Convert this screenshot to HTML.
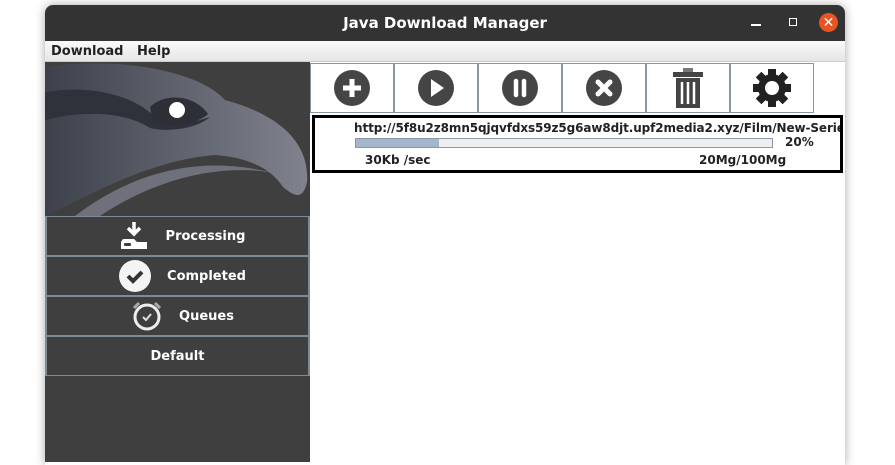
<!DOCTYPE html>
<html><head><style>
*{margin:0;padding:0;box-sizing:border-box}
body{width:895px;height:448px;background:#fff;position:relative;overflow:hidden;font-family:"Liberation Sans","DejaVu Sans",sans-serif}
.win{position:absolute;left:45px;top:5px;width:800px;height:460px;background:#fff;border-radius:8px 8px 0 0;box-shadow:0 0 10px rgba(0,0,0,.35);overflow:hidden}
.tb{height:36px;background:#333;color:#fff;font-weight:bold;font-size:15px;text-align:center;line-height:37px;font-family:"DejaVu Sans",sans-serif}
.menu{position:absolute;top:36px;left:0;width:800px;height:21px;background:linear-gradient(#fafafa,#e6e6e6);border-bottom:1px solid #ccc;font-family:"DejaVu Sans",sans-serif;font-weight:bold;font-size:13px;color:#222;line-height:22px;padding-left:6px}
.left{position:absolute;top:57px;left:0;width:265px;height:400px;background:#3f3f3f}
.btn{position:absolute;left:0;width:265px;height:40px;border:2px solid #7d8b98;border-top-width:1px;border-bottom-width:1px;color:#fff;font-family:"DejaVu Sans",sans-serif;font-weight:bold;font-size:13px;display:flex;align-items:center;justify-content:center;padding-left:10px}
.tool{position:absolute;top:58px;width:84px;height:50px;border:1px solid #8a97a3;background:#fff;display:flex;align-items:center;justify-content:center}
.item{position:absolute;left:267px;top:110px;width:531px;height:58px;border:3px solid #000;background:#fff;font-family:"DejaVu Sans",sans-serif;font-size:12px;font-weight:bold;color:#222;overflow:hidden}
</style></head><body>
<div class="win">
<div class="tb">Java Download Manager</div>
<div style="position:absolute;left:706px;top:19px;width:10px;height:1.5px;background:#fff"></div>
<div style="position:absolute;left:744px;top:13px;width:8px;height:8px;border:1.5px solid #fff"></div>
<div style="position:absolute;left:774px;top:8px;width:19px;height:19px;border-radius:50%;background:#e95420;color:#fff;font-size:14px;line-height:19px;text-align:center">✕</div>
<div class="menu">Download&nbsp;&nbsp;&nbsp;Help</div>
<div class="left">
<svg width="265" height="154" viewBox="0 0 265 154" style="position:absolute;top:0;left:0">
<defs><linearGradient id="g" x1="0" x2="1"><stop offset="0" stop-color="#3d414b"/><stop offset="1" stop-color="#80838d"/></linearGradient></defs>
<path d="M0 5 C60 -5 150 5 180 38 C225 50 265 75 262 120 C258 138 250 135 238 125 C225 105 200 95 170 93 C110 98 60 125 0 154 Z" fill="url(#g)"/>
<path d="M0 30 C50 22 90 35 110 55 C130 65 150 60 165 55 C150 68 120 70 105 66 C80 50 40 48 0 58 Z" fill="#2f323a"/>
<path d="M105 45 C120 30 150 33 163 52 C150 64 120 66 108 60 Z" fill="#2c2f36"/>
<circle cx="132" cy="48" r="8" fill="#fff"/>
<path d="M30 154 C90 108 160 92 232 112 C200 104 130 104 55 154Z" fill="#6e717b"/>
</svg>
<div class="btn" style="top:154px"><svg width="30" height="32" viewBox="0 0 30 32" style="margin-right:16px"><path d="M14 2v12M8 8l6 6 6-6" stroke="#fff" stroke-width="3.5" fill="none"/><path d="M3 19h11l3 3h10v7H1v-7z" fill="#fff"/><rect x="4" y="23" width="7" height="3" rx="1" fill="#3f3f3f"/></svg>Processing</div>
<div class="btn" style="top:194px"><svg width="32" height="32" viewBox="0 0 32 32" style="margin-right:16px"><circle cx="16" cy="16" r="16" fill="#f4f4f4"/><path d="M9 16l5 5 9-9" stroke="#333" stroke-width="4" fill="none"/></svg>Completed</div>
<div class="btn" style="top:234px"><svg width="32" height="32" viewBox="0 0 32 32" style="margin-right:16px"><circle cx="16" cy="17" r="12" stroke="#eee" stroke-width="3" fill="none"/><path d="M3 8l5-5M29 8l-5-5" stroke="#aaa" stroke-width="3"/><path d="M12 17l3 3 5-6" stroke="#ddd" stroke-width="2" fill="none"/></svg>Queues</div>
<div class="btn" style="top:274px;padding-left:0">Default</div>
</div>
<div class="tool" style="left:265px"><svg width="38" height="38"><circle cx="19" cy="19" r="18" fill="#454545"/><path d="M19 10v18M10 19h18" stroke="#fff" stroke-width="5"/></svg></div>
<div class="tool" style="left:349px"><svg width="38" height="38"><circle cx="19" cy="19" r="18" fill="#454545"/><path d="M14 10l13 9-13 9z" fill="#fff"/></svg></div>
<div class="tool" style="left:433px"><svg width="38" height="38"><circle cx="19" cy="19" r="18" fill="#454545"/><path d="M15 12v14M23 12v14" stroke="#fff" stroke-width="4.5" stroke-linecap="round"/></svg></div>
<div class="tool" style="left:517px"><svg width="38" height="38"><circle cx="19" cy="19" r="18" fill="#454545"/><path d="M13 13l12 12M25 13l-12 12" stroke="#fff" stroke-width="5" stroke-linecap="round"/></svg></div>
<div class="tool" style="left:601px"><svg width="34" height="42" viewBox="0 0 34 42"><rect x="12" y="1" width="10" height="4" fill="#777"/><rect x="2" y="5" width="30" height="5" fill="#444"/><rect x="5" y="11" width="24" height="30" fill="#444"/><path d="M11 15v22M17 15v22M23 15v22" stroke="#fff" stroke-width="2.5"/></svg></div>
<div class="tool" style="left:685px"><svg width="42" height="42" viewBox="0 0 42 42"><g fill="#222"><circle cx="21" cy="21" r="14"/><g id="t"><rect x="17" y="2" width="8" height="8"/><rect x="17" y="32" width="8" height="8"/></g><use href="#t" transform="rotate(45 21 21)"/><use href="#t" transform="rotate(90 21 21)"/><use href="#t" transform="rotate(135 21 21)"/></g><circle cx="21" cy="21" r="7" fill="#fff"/></svg></div>
<div class="item">
<div style="position:absolute;left:39px;top:3px;white-space:nowrap;letter-spacing:-0.1px">http://5f8u2z8mn5qjqvfdxs59z5g6aw8djt.upf2media2.xyz/Film/New-Series</div>
<div style="position:absolute;left:40px;top:20px;width:418px;height:10px;border:1px solid #8a98a6;background:#eee"><div style="width:83px;height:8px;background:#a3b6cb"></div></div>
<div style="position:absolute;left:470px;top:17px">20%</div>
<div style="position:absolute;left:50px;top:35px">30Kb /sec</div>
<div style="position:absolute;left:384px;top:35px">20Mg/100Mg</div>
</div>
</div>
</body></html>
